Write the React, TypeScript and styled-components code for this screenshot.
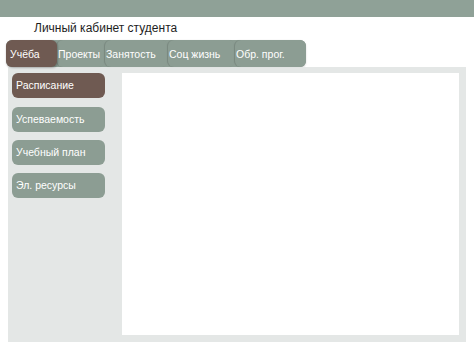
import React from "react";
import styled, { createGlobalStyle } from "styled-components";

const Global = createGlobalStyle`
  html, body { margin: 0; padding: 0; background: #ffffff; }
  body { font-family: "Liberation Sans", Arial, sans-serif; }
  * { box-sizing: border-box; }
`;

const Page = styled.div`
  width: 474px;
  height: 355px;
  overflow: hidden;
  background: #ffffff;
`;

const TopBar = styled.div`
  height: 17px;
  background: #8fa197;
`;

const Title = styled.div`
  height: 23px;
  padding-left: 34px;
  font-size: 12px;
  line-height: 23px;
  color: #1e1e1e;
`;

const TabBar = styled.div`
  margin-left: 6px;
  width: 300px;
  height: 27px;
  display: flex;
  background: #8c9d93;
  border-radius: 6px;
  box-shadow: 0 1px 2px rgba(0, 0, 0, 0.18);
`;

const Tab = styled.div<{ $active?: boolean; $w: number }>`
  position: relative;
  width: ${(p) => p.$w}px;
  height: 27px;
  padding-top: 1px;
  padding-left: ${(p) => (p.$active ? 4 : 1)}px;
  font-size: 10.5px;
  line-height: 26px;
  color: #ffffff;
  white-space: nowrap;
  overflow: hidden;
  background: ${(p) => (p.$active ? "#6f5a52" : "#8c9d93")};
  border-radius: 6px;
  z-index: ${(p) => (p.$active ? 2 : 1)};
  box-shadow: ${(p) =>
    p.$active ? "1px 1px 2px rgba(0,0,0,0.25)" : "-1px 0 1px rgba(0,0,0,0.14)"};
`;

const Panel = styled.div`
  margin-left: 8px;
  width: 458px;
  height: 275px;
  background: #e4e7e6;
  display: grid;
  grid-template-columns: 114px 1fr;
  padding: 6px 7px 7px 0;
`;

const Sidebar = styled.div`
  display: flex;
  flex-direction: column;
  gap: 8px;
  padding-left: 4px;
`;

const SideButton = styled.div<{ $active?: boolean }>`
  width: 93px;
  height: 25px;
  padding-left: 4px;
  border-radius: 6px;
  font-size: 10.5px;
  line-height: 25px;
  color: #ffffff;
  background: ${(p) => (p.$active ? "#6f5a52" : "#8c9d93")};
  &:first-child { margin-bottom: 1px; }
`;

const Content = styled.div`
  background: #ffffff;
`;

const tabs = [
  { label: "Учёба", w: 51, active: true },
  { label: "Проекты", w: 48 },
  { label: "Занятость", w: 63 },
  { label: "Соц жизнь", w: 67 },
  { label: "Обр. прог.", w: 71 },
];

const side = [
  { label: "Расписание", active: true },
  { label: "Успеваемость" },
  { label: "Учебный план" },
  { label: "Эл. ресурсы" },
];

export default function App() {
  return (
    <Page>
      <Global />
      <TopBar />
      <Title>Личный кабинет студента</Title>
      <TabBar>
        {tabs.map((t) => (
          <Tab key={t.label} $w={t.w} $active={t.active}>
            {t.label}
          </Tab>
        ))}
      </TabBar>
      <Panel>
        <Sidebar>
          {side.map((s) => (
            <SideButton key={s.label} $active={s.active}>
              {s.label}
            </SideButton>
          ))}
        </Sidebar>
        <Content />
      </Panel>
    </Page>
  );
}
